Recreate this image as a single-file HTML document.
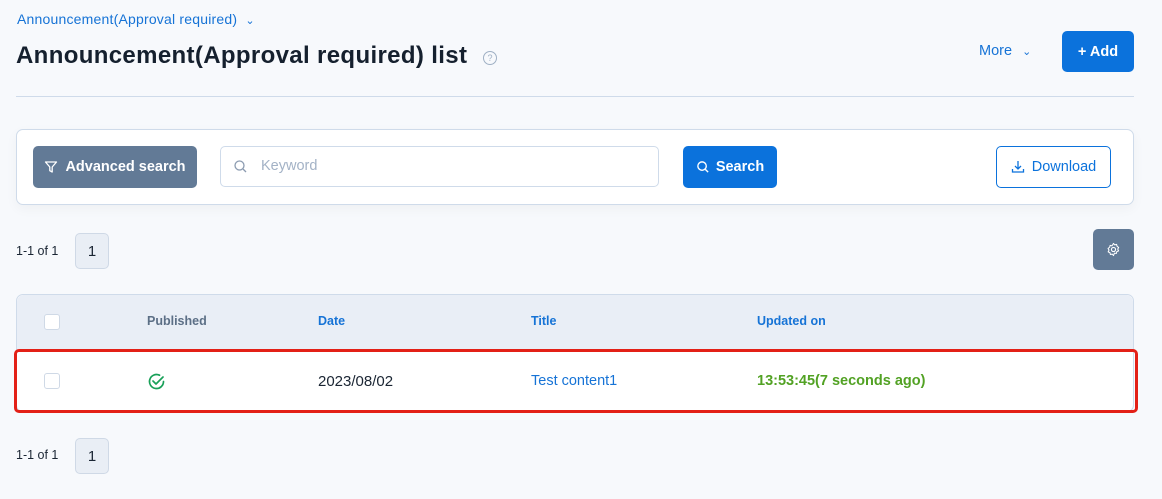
<!DOCTYPE html>
<html><head><style>
*{box-sizing:border-box;margin:0;padding:0}
body{width:1162px;height:499px;background:#f7f9fc;font-family:"Liberation Sans",sans-serif;position:relative;overflow:hidden;color:#1a2533}
.a{position:absolute}
.btn{position:absolute;border-radius:5px;display:flex;align-items:center;justify-content:center;font-size:14.5px;font-weight:bold}
.hd{font-size:12.5px;font-weight:bold;position:absolute;top:314px}
.cb{position:absolute;width:16px;height:16px;border:1px solid #cfd9e6;border-radius:3px;background:#fff}
.pg{position:absolute;width:34px;height:36px;border:1px solid #cfd9e6;border-radius:5px;background:#e9eef5;font-size:15px;display:flex;align-items:center;justify-content:center}
</style></head><body>
<div class="a" style="left:17px;top:11px;font-size:14px;color:#1673d6;letter-spacing:0.2px">Announcement(Approval required) <span style="font-size:11px;margin-left:4px">&#8964;</span></div>
<div class="a" style="left:16px;top:42px;font-size:24px;font-weight:bold;color:#15202e;letter-spacing:0.35px">Announcement(Approval required) list</div>
<div class="a" style="left:483px;top:51px;width:14px;height:14px;border:1.3px solid #9fb0c4;border-radius:50%;font-size:9px;color:#9fb0c4;text-align:center;line-height:12px">?</div>
<div class="a" style="left:979px;top:43px;font-size:14.5px;color:#1673d6">More <span style="font-size:11px;margin-left:6px">&#8964;</span></div>
<div class="btn" style="left:1062px;top:31px;width:72px;height:41px;background:#0b72dc;color:#fff">+ Add</div>
<div class="a" style="left:16px;top:96px;width:1118px;height:1px;background:#cfdbea"></div>
<div class="a" style="left:16px;top:129px;width:1118px;height:76px;background:#fff;border:1px solid #cfdbea;border-radius:7px;box-shadow:0 4px 12px rgba(0,0,0,.04)"></div>
<div class="btn" style="left:33px;top:146px;width:164px;height:42px;background:#627a96;color:#fff"><svg width="14" height="14" viewBox="0 0 14 14" style="margin-right:7px"><path d="M1.5 2h11l-4.3 5v5l-2.4-1.3V7z" fill="none" stroke="#fff" stroke-width="1.3" stroke-linejoin="round"/></svg>Advanced search</div>
<div class="a" style="left:220px;top:146px;width:439px;height:41px;background:#fff;border:1px solid #cfdbea;border-radius:5px"></div>
<svg class="a" style="left:233px;top:159px" width="15" height="15" viewBox="0 0 15 15"><circle cx="6.5" cy="6.5" r="4.5" fill="none" stroke="#8b9bb0" stroke-width="1.3"/><path d="M10 10l3 3" stroke="#8b9bb0" stroke-width="1.3"/></svg>
<div class="a" style="left:261px;top:158px;font-size:14.5px;color:#a3b2c6">Keyword</div>
<div class="btn" style="left:683px;top:146px;width:94px;height:42px;background:#0b72dc;color:#fff"><svg width="14" height="14" viewBox="0 0 15 15" style="margin-right:6px"><circle cx="6.5" cy="6.5" r="4.5" fill="none" stroke="#fff" stroke-width="1.5"/><path d="M10 10l3 3" stroke="#fff" stroke-width="1.5"/></svg>Search</div>
<div class="btn" style="left:996px;top:146px;width:115px;height:42px;background:#fff;border:1px solid #0b72dc;color:#0b72dc;font-weight:normal"><svg width="14" height="14" viewBox="0 0 14 14" style="margin-right:7px"><path d="M7 1v8M4 6l3 3 3-3M1.5 9v3h11V9" fill="none" stroke="#0b72dc" stroke-width="1.3"/></svg>Download</div>
<div class="a" style="left:16px;top:244px;font-size:12.5px">1-1 of 1</div>
<div class="pg" style="left:75px;top:233px">1</div>
<div class="btn" style="left:1093px;top:229px;width:41px;height:41px;background:#627a96"><svg width="15" height="15" viewBox="0 0 16 16"><circle cx="8" cy="8" r="2.2" fill="none" stroke="#fff" stroke-width="1.2"/><path d="M8 1.5l1.3 1.6 2-.5.5 2 1.7 1.2-1 1.8.9 1.9-1.9.8-.5 2-2-.4L8 14.5l-1.3-1.6-2 .4-.5-2-1.9-.8.9-1.9-1-1.8 1.7-1.2.5-2 2 .5z" fill="none" stroke="#fff" stroke-width="1.1" stroke-linejoin="round"/></svg></div>
<div class="a" style="left:16px;top:294px;width:1118px;height:118px;background:#fff;border:1px solid #cfdbea;border-radius:7px"></div>
<div class="a" style="left:17px;top:295px;width:1116px;height:54px;background:#e9eef6;border-radius:7px 7px 0 0"></div>
<div class="cb" style="left:44px;top:314px"></div>
<div class="hd" style="left:147px;color:#5c6f86">Published</div>
<div class="hd" style="left:318px;color:#1673d6">Date</div>
<div class="hd" style="left:531px;color:#1673d6">Title</div>
<div class="hd" style="left:757px;color:#1673d6">Updated on</div>
<div class="a" style="left:14px;top:349px;width:1124px;height:64px;border:3px solid #e32017;border-radius:5px"></div>
<div class="cb" style="left:44px;top:373px"></div>
<svg class="a" style="left:147px;top:372px" width="19" height="19" viewBox="0 0 19 19"><path d="M16.5 9.5A7 7 0 1 1 12.5 3.2" fill="none" stroke="#18a058" stroke-width="1.7" stroke-linecap="round"/><path d="M6 9l3 3 7-7" fill="none" stroke="#18a058" stroke-width="1.7" stroke-linecap="round" stroke-linejoin="round"/></svg>
<div class="a" style="left:318px;top:373px;font-size:15px">2023/08/02</div>
<div class="a" style="left:531px;top:373px;font-size:14.5px;color:#1673d6">Test content1</div>
<div class="a" style="left:757px;top:373px;font-size:14.5px;font-weight:bold;color:#52a224">13:53:45(7 seconds ago)</div>
<div class="a" style="left:16px;top:448px;font-size:12.5px">1-1 of 1</div>
<div class="pg" style="left:75px;top:438px">1</div>
</body></html>
